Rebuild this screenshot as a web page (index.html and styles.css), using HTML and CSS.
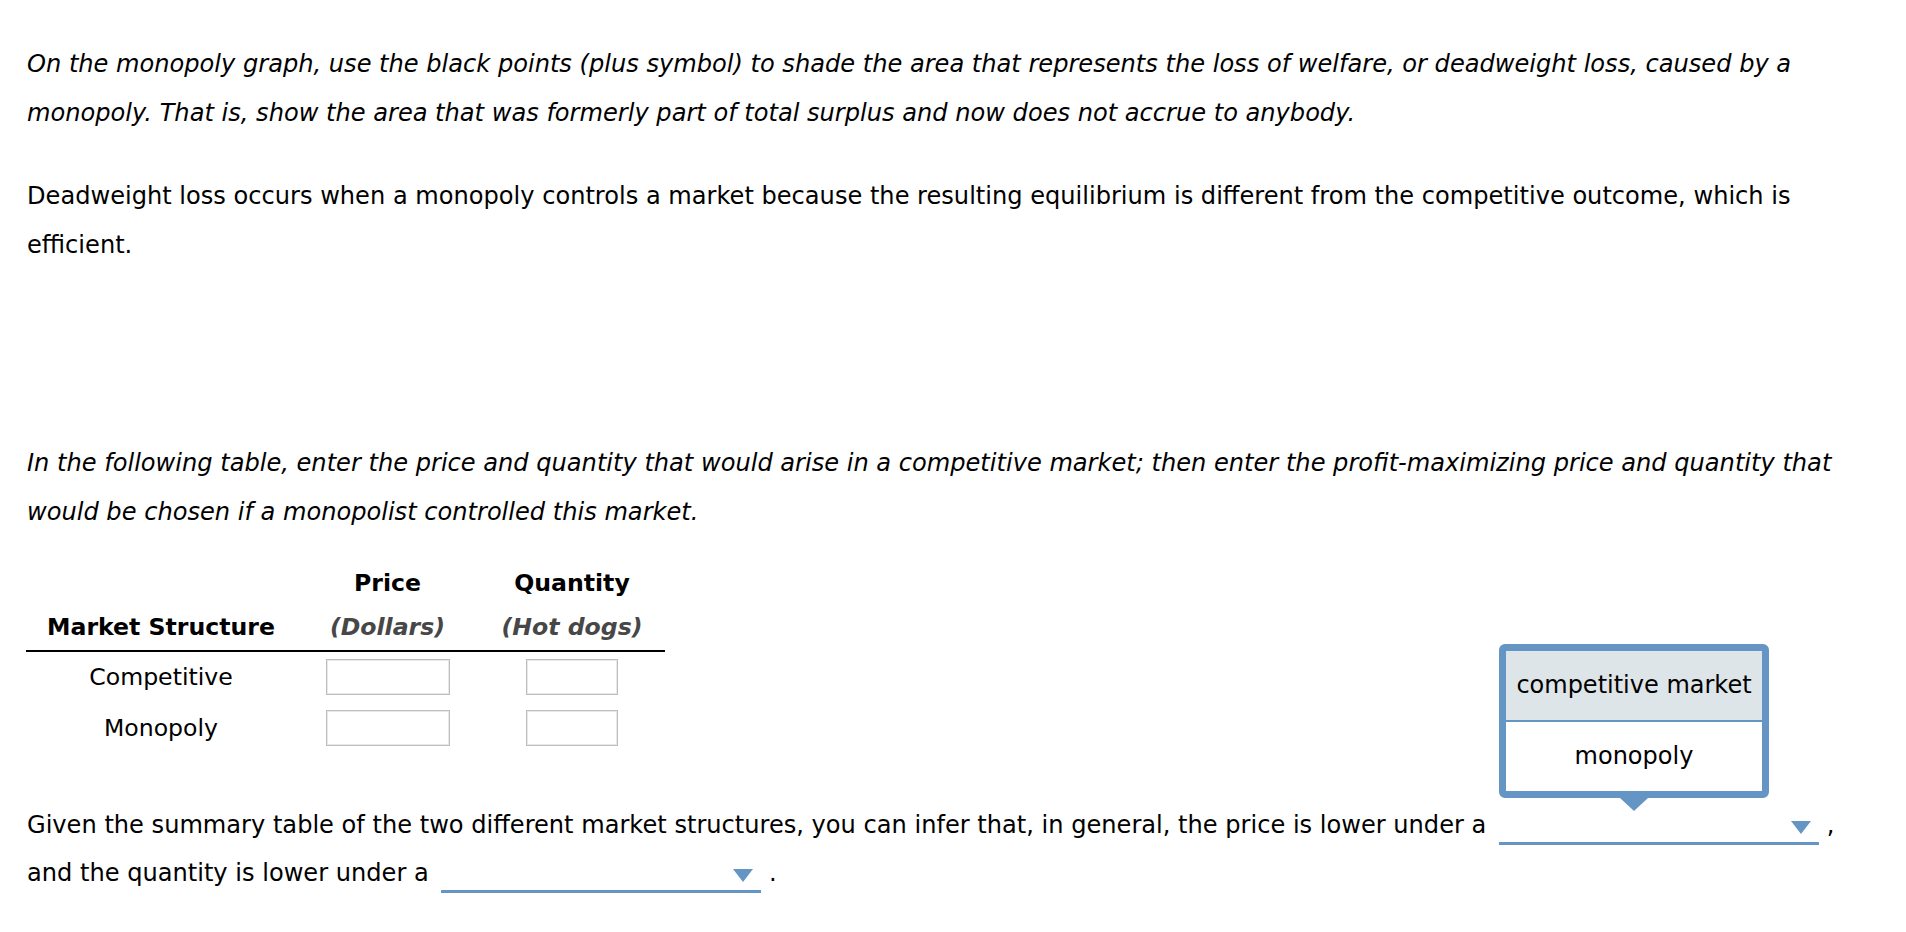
FILE: index.html
```html
<!DOCTYPE html>
<html lang="en">
<head>
<meta charset="utf-8">
<title>Monopoly deadweight loss</title>
<link rel="stylesheet" href="styles.css">
</head>
<body>
<main class="page">
  <p class="prompt">On the monopoly graph, use the black points (plus symbol) to shade the area that represents the loss of welfare, or deadweight loss, caused by a monopoly. That is, show the area that was formerly part of total surplus and now does not accrue to anybody.</p>
  <p class="note">Deadweight loss occurs when a monopoly controls a market because the resulting equilibrium is different from the competitive outcome, which is efficient.</p>
  <p class="prompt table-intro">In the following table, enter the price and quantity that would arise in a competitive market; then enter the profit-maximizing price and quantity that would be chosen if a monopolist controlled this market.</p>

  <table class="summary">
    <thead>
      <tr class="head-top">
        <th class="col-name"></th>
        <th class="col-price">Price</th>
        <th class="col-qty">Quantity</th>
      </tr>
      <tr class="head-bottom">
        <th class="col-name">Market Structure</th>
        <th class="col-price unit">(Dollars)</th>
        <th class="col-qty unit">(Hot dogs)</th>
      </tr>
    </thead>
    <tbody>
      <tr>
        <td class="col-name">Competitive</td>
        <td class="col-price"><input class="cell-input price-input" type="text" aria-label="Competitive price"></td>
        <td class="col-qty"><input class="cell-input qty-input" type="text" aria-label="Competitive quantity"></td>
      </tr>
      <tr>
        <td class="col-name">Monopoly</td>
        <td class="col-price"><input class="cell-input price-input" type="text" aria-label="Monopoly price"></td>
        <td class="col-qty"><input class="cell-input qty-input" type="text" aria-label="Monopoly quantity"></td>
      </tr>
    </tbody>
  </table>

  <p class="summary-text">Given the summary table of the two different market structures, you can infer that, in general, the price is lower under a <span class="dropdown open"><span class="dd-arrow"></span><span class="menu"><span class="menu-item selected">competitive market</span><span class="menu-item">monopoly</span></span></span> , and the quantity is lower under a <span class="dropdown"><span class="dd-arrow"></span></span> .</p>
</main>
</body>
</html>
```

FILE: styles.css
```css
html, body {
  margin: 0;
  padding: 0;
  background: #ffffff;
}

body {
  font-family: "DejaVu Sans", Verdana, sans-serif;
  font-size: 24.1px;
  line-height: 48.6px;
  color: #000000;
}

.page {
  padding: 40px 0 0 27px;
  width: 1840px;
}

p {
  margin: 0;
}

.prompt {
  font-style: italic;
  margin-bottom: 35px;
}

.note {
  margin-bottom: 170px;
}

.table-intro {
  margin-bottom: 24px;
}

.summary {
  border-collapse: collapse;
  margin-left: -1px;
  width: 639px;
  font-size: 23.6px;
}

.summary th,
.summary td {
  padding: 0;
  text-align: center;
  vertical-align: middle;
}

.summary th {
  font-weight: bold;
}

.col-name {
  width: 270px;
}

.col-price {
  width: 183px;
}

.col-qty {
  width: 186px;
}

.head-top th {
  height: 44px;
  line-height: 44px;
}

.head-bottom th {
  height: 45px;
  line-height: 45px;
  border-bottom: 2px solid #000000;
}

.unit {
  font-style: italic;
  color: #474747;
}

.summary tbody td {
  height: 51px;
  line-height: 30px;
}

.cell-input {
  display: block;
  margin: 0 auto;
  height: 36px;
  box-sizing: border-box;
  border: 1px solid #bdbdbd;
  box-shadow: inset 0 0 0 1px #e9e9e9;
  background: #ffffff;
  padding: 0;
  font: inherit;
}

.price-input {
  width: 124px;
}

.qty-input {
  width: 92px;
}

.summary-text {
  margin-top: 47px;
}

.dropdown {
  position: relative;
  display: inline-block;
  width: 320px;
  height: 36px;
  box-sizing: border-box;
  border-bottom: 3px solid #6495c5;
  vertical-align: -12px;
  margin-left: 5px;
}

.dd-arrow {
  position: absolute;
  right: 8px;
  top: 12px;
  width: 0;
  height: 0;
  border-left: 10px solid transparent;
  border-right: 10px solid transparent;
  border-top: 13px solid #6495c5;
}

.menu {
  position: absolute;
  left: 0;
  bottom: calc(100% + 11px);
  width: 270px;
  box-sizing: border-box;
  border: 7px solid #6495c5;
  border-radius: 6px;
  background: #ffffff;
  display: flex;
  flex-direction: column;
  line-height: 30px;
}

.menu::after {
  content: "";
  position: absolute;
  left: 50%;
  top: calc(100% + 7px);
  margin-left: -14px;
  width: 0;
  height: 0;
  border-left: 14px solid transparent;
  border-right: 14px solid transparent;
  border-top: 13px solid #6495c5;
}

.menu-item {
  display: flex;
  align-items: center;
  justify-content: center;
  height: 69px;
  font-size: 24px;
  white-space: nowrap;
}

.menu-item.selected {
  background: #dde5e8;
  border-bottom: 2px solid #6495c5;
}
```
